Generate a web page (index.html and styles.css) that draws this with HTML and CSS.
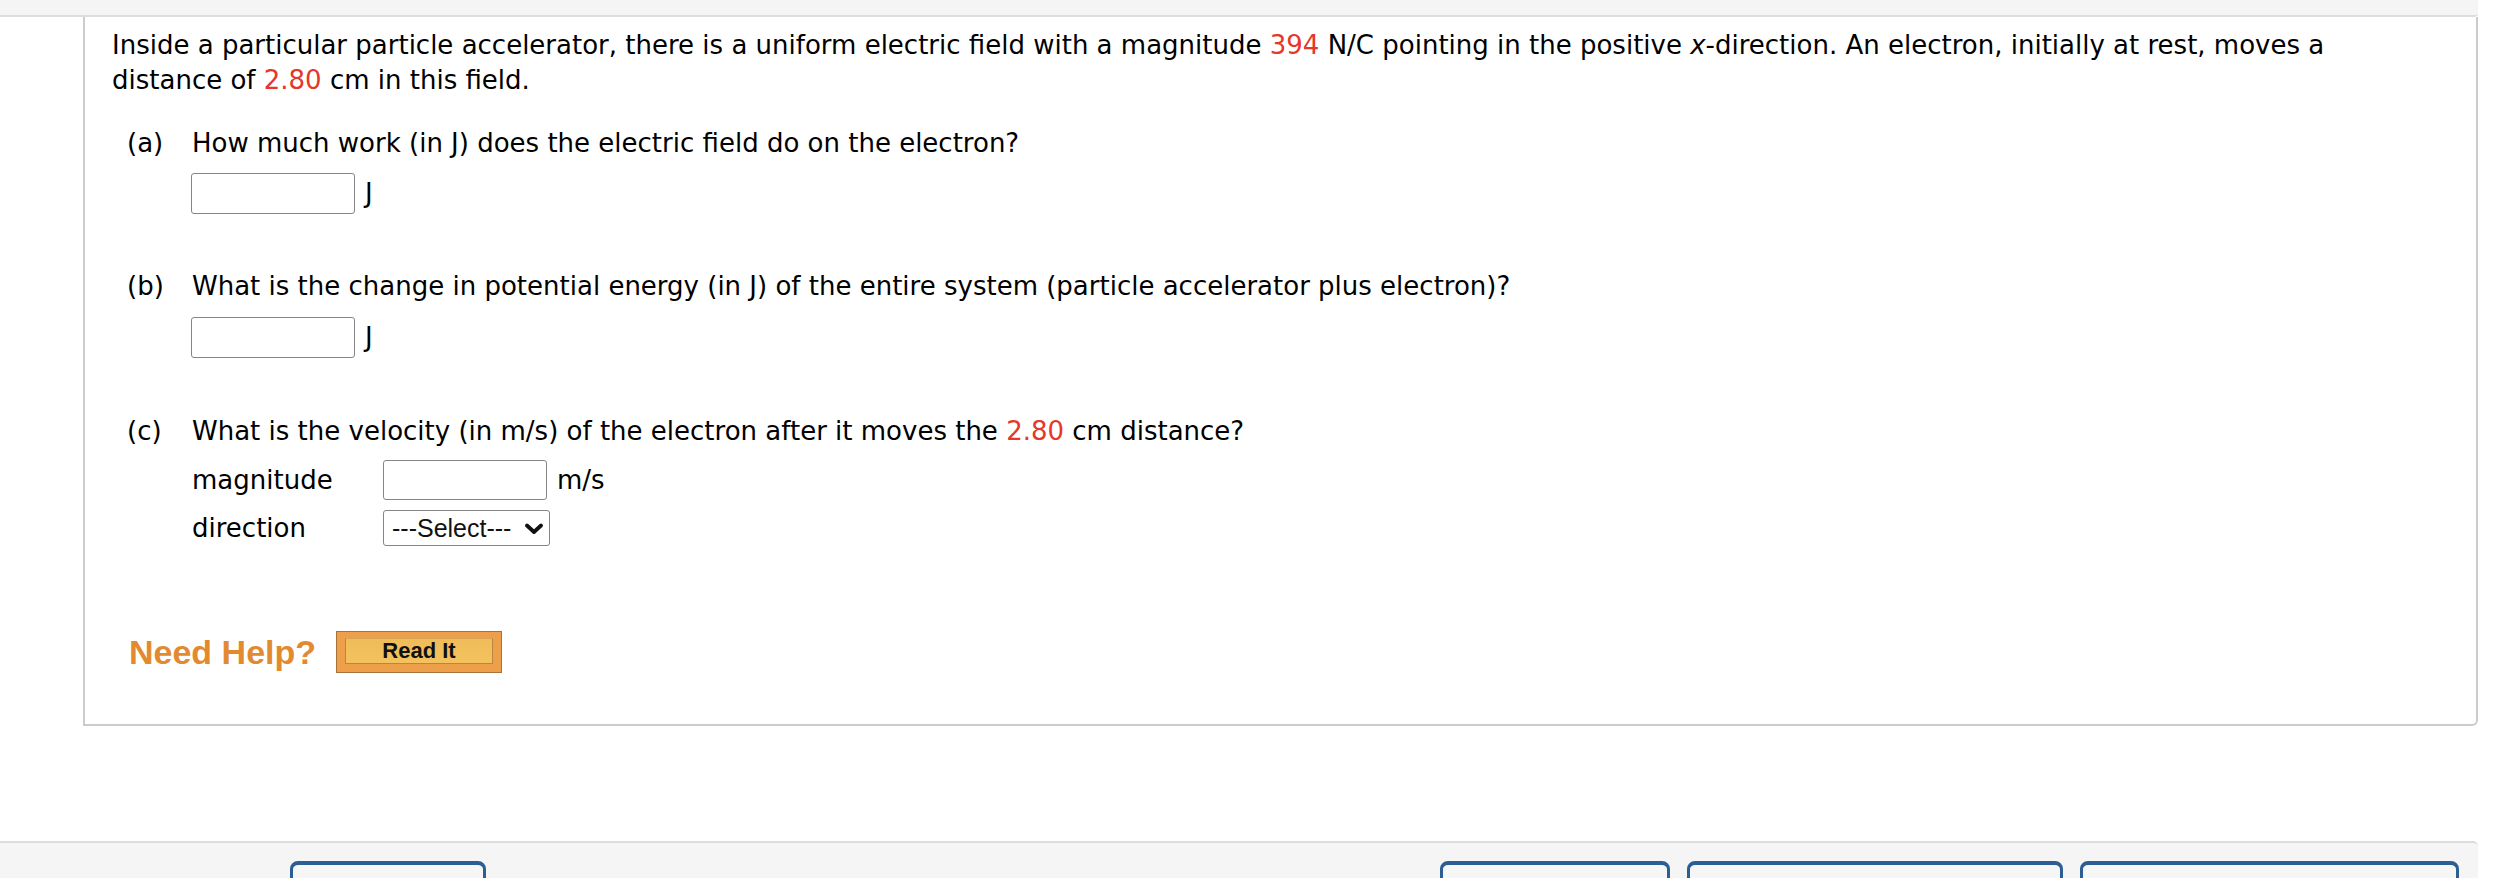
FILE: index.html
```html
<!DOCTYPE html>
<html lang="en">
<head>
<meta charset="utf-8">
<title>Particle accelerator question</title>
<link rel="stylesheet" href="styles.css">
</head>
<body>
<div class="page">
  <div class="topbar"></div>
  <div class="card">
    <p class="intro">Inside a particular particle accelerator, there is a uniform electric field with a magnitude <span class="red">394</span> N/C pointing in the positive <i>x</i>-direction. An electron, initially at rest, moves a<br>distance of <span class="red">2.80</span> cm in this field.</p>

    <div class="q q-first"><span class="lbl">(a)</span><span>How much work (in J) does the electric field do on the electron?</span></div>
    <div class="ans"><span class="box"></span><span class="unit">J</span></div>

    <div class="q"><span class="lbl">(b)</span><span>What is the change in potential energy (in J) of the entire system (particle accelerator plus electron)?</span></div>
    <div class="ans ans-b"><span class="box"></span><span class="unit">J</span></div>

    <div class="q q-c"><span class="lbl">(c)</span><span>What is the velocity (in m/s) of the electron after it moves the <span class="red">2.80</span> cm distance?</span></div>
    <div class="row row-mag"><span class="rlabel">magnitude</span><span class="box"></span><span class="unit">m/s</span></div>
    <div class="row row-dir"><span class="rlabel">direction</span><span class="select"><span class="sel-text">---Select---</span><svg class="chev" width="20" height="12" viewBox="0 0 20 12"><path d="M3 2.5 L10 9 L17 2.5" fill="none" stroke="#111" stroke-width="3.8" stroke-linecap="round" stroke-linejoin="round"/></svg></span></div>

    <div class="help"><span class="need">Need Help?</span><span class="readit"><span class="readit-inner">Read It</span></span></div>
  </div>
  <div class="footer">
    <span class="fbtn fbtn-1"></span>
    <span class="fgap"></span>
    <span class="fbtn fbtn-2"></span>
    <span class="fbtn fbtn-3"></span>
    <span class="fbtn fbtn-4"></span>
  </div>
</div>
</body>
</html>
```

FILE: styles.css
```css
html, body {
  margin: 0;
  padding: 0;
  background: #ffffff;
  overflow: hidden;
}

.page {
  width: 2478px;
  font-family: "DejaVu Sans", Verdana, sans-serif;
  font-size: 26px;
  color: #000;
}

.topbar {
  height: 15px;
  background: #f5f5f5;
  border-bottom: 2px solid #dddddd;
  border-bottom-right-radius: 4px;
}

.card {
  margin-left: 83px;
  border-left: 2px solid #cccccc;
  border-right: 2px solid #cccccc;
  border-bottom: 2px solid #cccccc;
  border-bottom-right-radius: 6px;
  padding: 11px 40px 51px 27px;
}

.intro {
  margin: 0;
  line-height: 35px;
}

.red { color: #e5372a; }

.q {
  display: flex;
  margin-top: 55px;
  margin-left: 15px;
  line-height: 35px;
}
.q-first { margin-top: 28px; }
.q-c { margin-top: 56px; }

.lbl {
  width: 65px;
  flex: none;
}

.ans {
  display: flex;
  align-items: center;
  margin-top: 12px;
  margin-left: 79px;
  height: 41px;
}
.ans-b { margin-top: 13px; }

.box {
  display: inline-block;
  width: 162px;
  height: 39px;
  border: 1px solid #858585;
  border-radius: 3px;
  background: #fff;
  box-sizing: content-box;
}

.unit {
  margin-left: 10px;
  line-height: 35px;
}

.row {
  display: flex;
  align-items: center;
  margin-left: 80px;
  line-height: 35px;
}
.row-mag { margin-top: 11px; height: 40px; }
.row-mag .box { height: 38px; }
.row-dir { margin-top: 10px; height: 36px; }

.rlabel {
  width: 191px;
  flex: none;
}

.select {
  display: flex;
  align-items: center;
  justify-content: space-between;
  box-sizing: border-box;
  width: 167px;
  height: 36px;
  border: 1px solid #858585;
  border-radius: 3px;
  padding: 0 5px 0 8px;
  font-family: "Liberation Sans", Arial, sans-serif;
  font-size: 25px;
  line-height: 34px;
  color: #111;
}

.chev { flex: none; margin-top: 1px; }

.help {
  display: flex;
  align-items: center;
  margin-top: 85px;
  margin-left: 17px;
  height: 42px;
}

.need {
  font-family: "Liberation Sans", Arial, sans-serif;
  font-weight: bold;
  font-size: 34px;
  color: #e38a31;
  width: 207px;
  flex: none;
  line-height: 42px;
}

.readit {
  display: flex;
  align-items: center;
  justify-content: center;
  width: 166px;
  height: 42px;
  box-sizing: border-box;
  border: 1px solid #a8733a;
  background: #eda049;
  padding: 6px 8px 8px 8px;
}

.readit-inner {
  display: flex;
  align-items: center;
  justify-content: center;
  width: 100%;
  height: 100%;
  box-sizing: border-box;
  border: 1px solid #b88542;
  border-top-color: #d9a259;
  background: linear-gradient(#f0bc5a, #f3c25e);
  font-family: "Liberation Sans", Arial, sans-serif;
  font-weight: bold;
  font-size: 22px;
  color: #111;
}

.footer {
  display: flex;
  align-items: flex-start;
  margin-top: 115px;
  overflow: hidden;
  background: #f5f5f5;
  border-top: 2px solid #dddddd;
  border-top-right-radius: 5px;
  padding: 18px 19px 0 290px;
  box-sizing: border-box;
  height: 38px;
}

.fbtn {
  flex: none;
  height: 40px;
  box-sizing: border-box;
  border: 3px solid #2b5f93;
  border-top-width: 4px;
  border-radius: 8px 8px 0 0;
  background: #f6f6f6;
}
.fbtn-1 { width: 196px; }
.fgap { flex: 1; }
.fbtn-2 { width: 230px; }
.fbtn-3 { width: 376px; margin-left: 17px; }
.fbtn-4 { width: 379px; margin-left: 17px; }
```
